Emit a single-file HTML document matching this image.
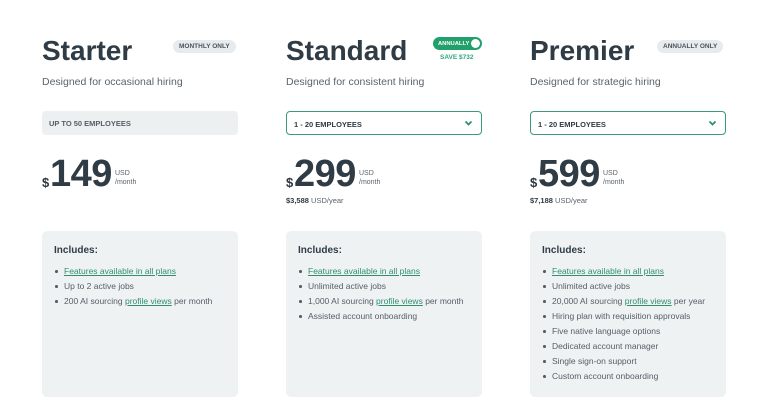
<!DOCTYPE html>
<html><head><style>
*{margin:0;padding:0;box-sizing:border-box}
body{width:768px;height:403px;background:#fff;font-family:"Liberation Sans",sans-serif;color:#2c3640;position:relative;overflow:hidden}
.col{position:absolute;top:0;width:196px}
h1{position:absolute;top:35px;left:0;font-size:28px;font-weight:bold;color:#2f3b45;letter-spacing:0}
.sub{position:absolute;top:76px;left:0;font-size:10.5px;color:#5a636b}
.badge{position:absolute;font-size:6.5px;font-weight:bold;background:#e8ebed;color:#4a525a;border-radius:8px;padding:3px 6px;top:40px}
.box{position:absolute;top:111px;left:0;width:196px;height:24px;border-radius:4px;font-size:7.5px;font-weight:bold;padding:8px 7px;color:#2f3b45}
.grey{background:#edf0f1;color:#555e66}
.sel{border:1px solid #3a9a7a;background:#fff}
.chev{position:absolute;right:8px;top:8px}
.price{position:absolute;top:153px;left:0;height:50px}
.dol{position:absolute;left:0;top:22px;font-size:13px;font-weight:bold}
.num{position:absolute;left:8px;top:0;font-size:38px;font-weight:bold;letter-spacing:-0.5px;color:#2f3b45}
.usd{position:absolute;left:73px;top:16px;font-size:7px;color:#5a636b;line-height:9px}
.yr{position:absolute;top:196px;left:0;font-size:7.5px;color:#5a636b}
.yr b{color:#2f3b45}
.inc{position:absolute;top:231px;left:0;width:196px;height:166px;background:#eff2f3;border-radius:5px;padding:14px 12px}
.inc h3{font-size:10px;font-weight:bold;color:#2f3b45;margin-bottom:9px}
.inc ul{list-style:none}
.inc li{font-size:8.5px;color:#555e66;height:15px;line-height:12px;position:relative;padding-left:10px}
.inc li:before{content:"";position:absolute;left:1px;top:5px;width:2.5px;height:2.5px;background:#555e66;border-radius:50%}
a{color:#2f8f6f;text-decoration:underline}
.tog{position:absolute;left:147px;top:37px;width:49px;height:13px;background:#22a06b;border-radius:7px;font-size:5.8px;font-weight:bold;color:#fff;padding:3.5px 0 0 5px}
.tog:after{content:"";position:absolute;right:2px;top:2px;width:9px;height:9px;border-radius:50%;background:#fff}
.save{position:absolute;left:154px;top:54px;font-size:6.5px;font-weight:bold;color:#2aa87a}
</style></head><body>
<div class="col" style="left:42px">
<h1>Starter</h1><div class="badge" style="left:131px">MONTHLY ONLY</div>
<div class="sub">Designed for occasional hiring</div>
<div class="box grey">UP TO 50 EMPLOYEES</div>
<div class="price"><span class="dol">$</span><span class="num">149</span><div class="usd">USD<br>/month</div></div>
<div class="inc"><h3>Includes:</h3><ul><li><a>Features available in all plans</a></li><li>Up to 2 active jobs</li><li>200 AI sourcing <a>profile views</a> per month</li></ul></div>
</div>
<div class="col" style="left:286px">
<h1>Standard</h1><div class="tog">ANNUALLY</div><div class="save">SAVE $732</div>
<div class="sub">Designed for consistent hiring</div>
<div class="box sel">1 - 20 EMPLOYEES<svg class="chev" width="9" height="7" viewBox="0 0 9 7"><path d="M1.5 1.5L4.5 4.5L7.5 1.5" stroke="#2f8f6f" stroke-width="1.8" fill="none"/></svg></div>
<div class="price"><span class="dol">$</span><span class="num">299</span><div class="usd">USD<br>/month</div></div>
<div class="yr"><b>$3,588</b> USD/year</div>
<div class="inc"><h3>Includes:</h3><ul><li><a>Features available in all plans</a></li><li>Unlimited active jobs</li><li>1,000 AI sourcing <a>profile views</a> per month</li><li>Assisted account onboarding</li></ul></div>
</div>
<div class="col" style="left:530px">
<h1>Premier</h1><div class="badge" style="left:127px">ANNUALLY ONLY</div>
<div class="sub">Designed for strategic hiring</div>
<div class="box sel">1 - 20 EMPLOYEES<svg class="chev" width="9" height="7" viewBox="0 0 9 7"><path d="M1.5 1.5L4.5 4.5L7.5 1.5" stroke="#2f8f6f" stroke-width="1.8" fill="none"/></svg></div>
<div class="price"><span class="dol">$</span><span class="num">599</span><div class="usd">USD<br>/month</div></div>
<div class="yr"><b>$7,188</b> USD/year</div>
<div class="inc"><h3>Includes:</h3><ul><li><a>Features available in all plans</a></li><li>Unlimited active jobs</li><li>20,000 AI sourcing <a>profile views</a> per year</li><li>Hiring plan with requisition approvals</li><li>Five native language options</li><li>Dedicated account manager</li><li>Single sign-on support</li><li>Custom account onboarding</li></ul></div>
</div>
</body></html>
